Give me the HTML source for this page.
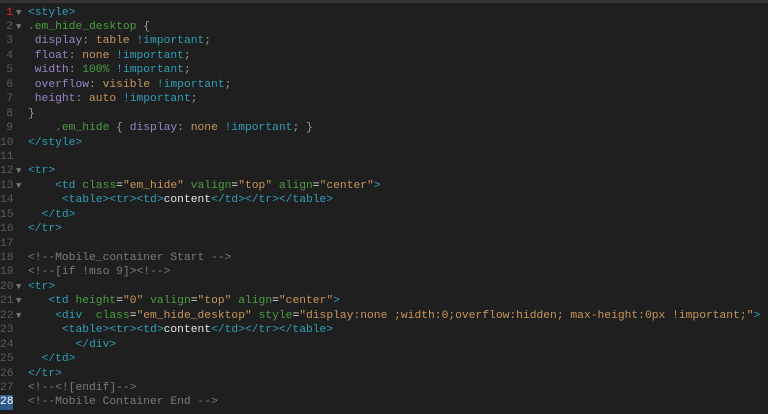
<!DOCTYPE html>
<html><head><meta charset="utf-8"><style>
html,body{margin:0;padding:0;background:#1f1f1f;width:768px;height:412px;overflow:hidden}
.top{position:absolute;left:0;top:0;width:768px;height:3px;background:#333}
.wrap{position:absolute;left:0;top:1.5px;width:768px;height:412px}
.ln{position:absolute;left:0;height:14.44px;line-height:14.44px;font-family:"Liberation Mono",monospace;font-size:11.3px;white-space:pre;color:#d8d8d8;width:768px}
.n{position:absolute;left:0;width:13px;text-align:right;color:#5a5a5a}
.a{position:absolute;left:16px;color:#777;font-size:9px}
.c{position:absolute;left:28px}
.t{color:#2f9fb8}.s{color:#4a9e3f}.p{color:#9a85c8}.v{color:#c8955a}.i{color:#2f9fb8}.g{color:#49a040}.m{color:#7a7a7a}.b{color:#999}.q{color:#c8955a}.w{color:#e6e6e6}
.hl{background:#2c5a8c;color:#fff;text-align:right}
</style></head><body>
<div class="top"></div>
<div class="wrap">
<div class="ln" style="top:4px"><span class="n" style="color:#e22">1</span><span class="a">▼</span><span class="c"><span class="t">&lt;style&gt;</span></span></div>
<div class="ln" style="top:18.4px"><span class="n">2</span><span class="a">▼</span><span class="c"><span class="s">.em_hide_desktop</span> <span class="b">{</span></span></div>
<div class="ln" style="top:32.9px"><span class="n">3</span><span class="c"> <span class="p">display</span><span class="b">:</span> <span class="v">table</span> <span class="i">!important</span><span class="b">;</span></span></div>
<div class="ln" style="top:47.3px"><span class="n">4</span><span class="c"> <span class="p">float</span><span class="b">:</span> <span class="v">none</span> <span class="i">!important</span><span class="b">;</span></span></div>
<div class="ln" style="top:61.8px"><span class="n">5</span><span class="c"> <span class="p">width</span><span class="b">:</span> <span class="g">100%</span> <span class="i">!important</span><span class="b">;</span></span></div>
<div class="ln" style="top:76.2px"><span class="n">6</span><span class="c"> <span class="p">overflow</span><span class="b">:</span> <span class="v">visible</span> <span class="i">!important</span><span class="b">;</span></span></div>
<div class="ln" style="top:90.6px"><span class="n">7</span><span class="c"> <span class="p">height</span><span class="b">:</span> <span class="v">auto</span> <span class="i">!important</span><span class="b">;</span></span></div>
<div class="ln" style="top:105.1px"><span class="n">8</span><span class="c"><span class="b">}</span></span></div>
<div class="ln" style="top:119.5px"><span class="n">9</span><span class="c">    <span class="s">.em_hide</span> <span class="b">{</span> <span class="p">display</span><span class="b">:</span> <span class="v">none</span> <span class="i">!important</span><span class="b">;</span> <span class="b">}</span></span></div>
<div class="ln" style="top:134px"><span class="n">10</span><span class="c"><span class="t">&lt;/style&gt;</span></span></div>
<div class="ln" style="top:148.4px"><span class="n">11</span></div>
<div class="ln" style="top:162.8px"><span class="n">12</span><span class="a">▼</span><span class="c"><span class="t">&lt;tr&gt;</span></span></div>
<div class="ln" style="top:177.3px"><span class="n">13</span><span class="a">▼</span><span class="c">    <span class="t">&lt;td</span> <span class="s">class</span><span class="w">=</span><span class="q">"em_hide"</span> <span class="s">valign</span><span class="w">=</span><span class="q">"top"</span> <span class="s">align</span><span class="w">=</span><span class="q">"center"</span><span class="t">&gt;</span></span></div>
<div class="ln" style="top:191.7px"><span class="n">14</span><span class="c">     <span class="t">&lt;table&gt;&lt;tr&gt;&lt;td&gt;</span><span class="w">content</span><span class="t">&lt;/td&gt;&lt;/tr&gt;&lt;/table&gt;</span></span></div>
<div class="ln" style="top:206.2px"><span class="n">15</span><span class="c">  <span class="t">&lt;/td&gt;</span></span></div>
<div class="ln" style="top:220.6px"><span class="n">16</span><span class="c"><span class="t">&lt;/tr&gt;</span></span></div>
<div class="ln" style="top:235px"><span class="n">17</span></div>
<div class="ln" style="top:249.5px"><span class="n">18</span><span class="c"><span class="m">&lt;!--Mobile_container Start --&gt;</span></span></div>
<div class="ln" style="top:263.9px"><span class="n">19</span><span class="c"><span class="m">&lt;!--[if !mso 9]&gt;&lt;!--&gt;</span></span></div>
<div class="ln" style="top:278.4px"><span class="n">20</span><span class="a">▼</span><span class="c"><span class="t">&lt;tr&gt;</span></span></div>
<div class="ln" style="top:292.8px"><span class="n">21</span><span class="a">▼</span><span class="c">   <span class="t">&lt;td</span> <span class="s">height</span><span class="w">=</span><span class="q">"0"</span> <span class="s">valign</span><span class="w">=</span><span class="q">"top"</span> <span class="s">align</span><span class="w">=</span><span class="q">"center"</span><span class="t">&gt;</span></span></div>
<div class="ln" style="top:307.2px"><span class="n">22</span><span class="a">▼</span><span class="c">    <span class="t">&lt;div</span>  <span class="s">class</span><span class="w">=</span><span class="q">"em_hide_desktop"</span> <span class="s">style</span><span class="w">=</span><span class="q">"display:none ;width:0;overflow:hidden; max-height:0px !important;"</span><span class="t">&gt;</span></span></div>
<div class="ln" style="top:321.7px"><span class="n">23</span><span class="c">     <span class="t">&lt;table&gt;&lt;tr&gt;&lt;td&gt;</span><span class="w">content</span><span class="t">&lt;/td&gt;&lt;/tr&gt;&lt;/table&gt;</span></span></div>
<div class="ln" style="top:336.1px"><span class="n">24</span><span class="c">       <span class="t">&lt;/div&gt;</span></span></div>
<div class="ln" style="top:350.6px"><span class="n">25</span><span class="c">  <span class="t">&lt;/td&gt;</span></span></div>
<div class="ln" style="top:365px"><span class="n">26</span><span class="c"><span class="t">&lt;/tr&gt;</span></span></div>
<div class="ln" style="top:379.4px"><span class="n">27</span><span class="c"><span class="m">&lt;!--&lt;![endif]--&gt;</span></span></div>
<div class="ln" style="top:393.9px"><span class="n hl">28</span><span class="c"><span class="m">&lt;!--Mobile Container End --&gt;</span></span></div>
</div>
</body></html>
